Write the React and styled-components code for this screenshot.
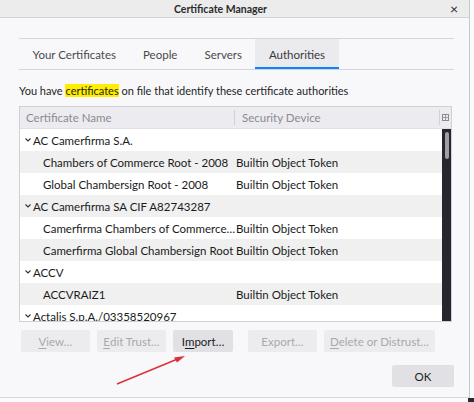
import React from "react";
import styled, { createGlobalStyle } from "styled-components";

const Global = createGlobalStyle`
  html, body { margin: 0; padding: 0; background: #fbfbfb; }
  body { font-family: Lato, "Noto Sans", sans-serif; color: #222; }
`;

const Win = styled.div`
  position: relative;
  width: 470px;
  height: 398px;
  background: #f8f8fa;
  border-right: 1px solid #c8c8cc;
  border-bottom: 1px solid #d8d8dc;
  box-sizing: border-box;
  display: flex;
  flex-direction: column;
  overflow: hidden;
`;

const TitleBar = styled.div`
  height: 17px;
  flex: none;
  background: #ececec;
  border-bottom: 1px solid #d2d2d2;
  display: flex;
  align-items: center;
  justify-content: center;
  padding-right: 28px;
  position: relative;
  font-size: 10.5px;
  font-weight: 700;
  color: #2a2a2a;
`;

const Close = styled.span`
  position: absolute;
  right: 11px;
  top: 0;
  font-size: 14px;
  font-weight: 400;
  line-height: 17px;
`;

const Body = styled.div`
  padding: 20px 15px 0 19px;
  display: flex;
  flex-direction: column;
`;

const Tabs = styled.div`
  display: flex;
  border-top: 1px solid #d6d6da;
  border-bottom: 1px solid #d6d6da;
  height: 30px;
`;

const Tab = styled.div`
  display: flex;
  align-items: center;
  padding: 0 13.5px;
  font-size: 11.5px;
  color: ${(p) => (p.$active ? "#3a3a3a" : "#4a4a4a")};
  background: ${(p) => (p.$active ? "#ebebef" : "transparent")};
  box-shadow: ${(p) => (p.$active ? "inset 0 -2px 0 #0a84ff" : "none")};
`;

const Desc = styled.div`
  margin-top: 12px;
  font-size: 11px;
  line-height: 17px;
  color: #1e1e1e;
`;

const Mark = styled.span`
  background: #ffee00;
`;

const Tree = styled.div`
  margin-top: 7px;
  width: 433px;
  border: 1px solid #cfcfd6;
  box-sizing: border-box;
  background: #fff;
`;

const Header = styled.div`
  display: grid;
  grid-template-columns: 215px 1fr 11px;
  height: 21px;
  background: #ececf0;
  border-bottom: 1px solid #e0e0e4;
  font-size: 11.5px;
  color: #8a8a90;
`;

const HeadCell = styled.div`
  display: flex;
  align-items: center;
  padding-left: ${(p) => p.$pl}px;
  border-right: ${(p) => (p.$sep ? "1px solid #d0d0d6" : "none")};
  margin: 3px 0;
`;

const Picker = styled.div`
  display: flex;
  align-items: center;
  justify-content: center;
`;

const TreeBody = styled.div`
  display: flex;
  height: 192px;
  overflow: hidden;
`;

const Rows = styled.div`
  flex: 1;
`;

const Row = styled.div`
  display: grid;
  grid-template-columns: 215px 1fr;
  height: 22px;
  align-items: center;
  font-size: 11.5px;
  color: #1a1a1a;
  background: ${(p) => (p.$alt ? "#f0f0f0" : "#fff")};
`;

const NameCell = styled.div`
  display: flex;
  align-items: center;
  padding-left: ${(p) => (p.$group ? 5 : 23)}px;
  white-space: nowrap;
  overflow: hidden;
`;

const DevCell = styled.div`
  padding-left: 1px;
  white-space: nowrap;
`;

const Chevron = styled.svg`
  width: 6px;
  height: 4px;
  margin-right: 2px;
  flex: none;
`;

const Scrollbar = styled.div`
  width: 9px;
  background: #26262f;
  display: flex;
  justify-content: center;
  padding-top: 3px;
  box-sizing: border-box;
`;

const Thumb = styled.div`
  width: 4px;
  height: 27px;
  border-radius: 2px;
  background: #a0a0a4;
`;

const ButtonRow = styled.div`
  display: flex;
  gap: 7px;
  margin-top: 8px;
  padding-left: 2px;
`;

const Button = styled.div`
  height: 22px;
  width: ${(p) => p.$w}px;
  margin-right: ${(p) => p.$mr || 0}px;
  display: flex;
  align-items: center;
  justify-content: center;
  font-size: 11.5px;
  border-radius: 2px;
  background: ${(p) => (p.$enabled ? "#e1e1e5" : "#ececef")};
  color: ${(p) => (p.$enabled ? "#1c1c1c" : "#a8a8ac")};
`;

const Footer = styled.div`
  display: flex;
  justify-content: flex-end;
  margin-top: 13px;
`;

const Arrow = styled.svg`
  position: absolute;
  left: 110px;
  top: 348px;
  width: 82px;
  height: 44px;
  overflow: visible;
`;

const Corner = styled.div`
  position: absolute;
  right: -4px;
  bottom: -4px;
  width: 10px;
  height: 8px;
  background: #2a2a34;
`;

const U = styled.span`
  text-decoration: underline;
  text-underline-offset: 2px;
`;

const rows = [
  { g: true, name: "AC Camerfirma S.A." },
  { name: "Chambers of Commerce Root - 2008", dev: "Builtin Object Token" },
  { name: "Global Chambersign Root - 2008", dev: "Builtin Object Token" },
  { g: true, name: "AC Camerfirma SA CIF A82743287" },
  { name: "Camerfirma Chambers of Commerce…", dev: "Builtin Object Token" },
  { name: "Camerfirma Global Chambersign Root", dev: "Builtin Object Token" },
  { g: true, name: "ACCV" },
  { name: "ACCVRAIZ1", dev: "Builtin Object Token" },
  { g: true, name: "Actalis S.p.A./03358520967" },
];

export default function App() {
  return (
    <>
      <Global />
      <Win>
        <TitleBar>
          Certificate Manager
          <Close>×</Close>
        </TitleBar>
        <Body>
          <Tabs>
            <Tab>Your Certificates</Tab>
            <Tab>People</Tab>
            <Tab>Servers</Tab>
            <Tab $active>Authorities</Tab>
          </Tabs>
          <Desc>
            You have <Mark>certificates</Mark> on file that identify these certificate authorities
          </Desc>
          <Tree>
            <Header>
              <HeadCell $pl={6} $sep>Certificate Name</HeadCell>
              <HeadCell $pl={7} $sep>Security Device</HeadCell>
              <Picker>
                <svg width="7" height="7" viewBox="0 0 7 7">
                  <rect x="0.5" y="0.5" width="6" height="6" fill="none" stroke="#8a8a90" strokeWidth="1" />
                  <path d="M0.5 3.5h6M3.5 0.5v6" stroke="#8a8a90" strokeWidth="0.8" />
                </svg>
              </Picker>
            </Header>
            <TreeBody>
              <Rows>
                {rows.map((r, i) => (
                  <Row key={i} $alt={i % 2 === 1}>
                    <NameCell $group={r.g}>
                      {r.g && (
                        <Chevron viewBox="0 0 6 4">
                          <path d="M0.5 0.5L3 3L5.5 0.5" fill="none" stroke="#333" strokeWidth="1.1" />
                        </Chevron>
                      )}
                      {r.name}
                    </NameCell>
                    <DevCell>{r.dev || ""}</DevCell>
                  </Row>
                ))}
              </Rows>
              <Scrollbar>
                <Thumb />
              </Scrollbar>
            </TreeBody>
          </Tree>
          <ButtonRow>
            <Button $w={69}><U>V</U>iew…</Button>
            <Button $w={69}><U>E</U>dit Trust…</Button>
            <Button $w={60} $enabled $mr={8}>I<U>m</U>port…</Button>
            <Button $w={69}>Export…</Button>
            <Button $w={111}><U>D</U>elete or Distrust…</Button>
          </ButtonRow>
          <Footer>
            <Button $w={62} $enabled>OK</Button>
          </Footer>
        </Body>
        <Arrow viewBox="0 0 82 44">
          <line x1="7" y1="36" x2="70" y2="10" stroke="#d9303a" strokeWidth="1.4" />
          <path d="M75 8L64 9.5L67 14.5Z" fill="#d9303a" />
        </Arrow>
      </Win>
      <Corner />
    </>
  );
}
